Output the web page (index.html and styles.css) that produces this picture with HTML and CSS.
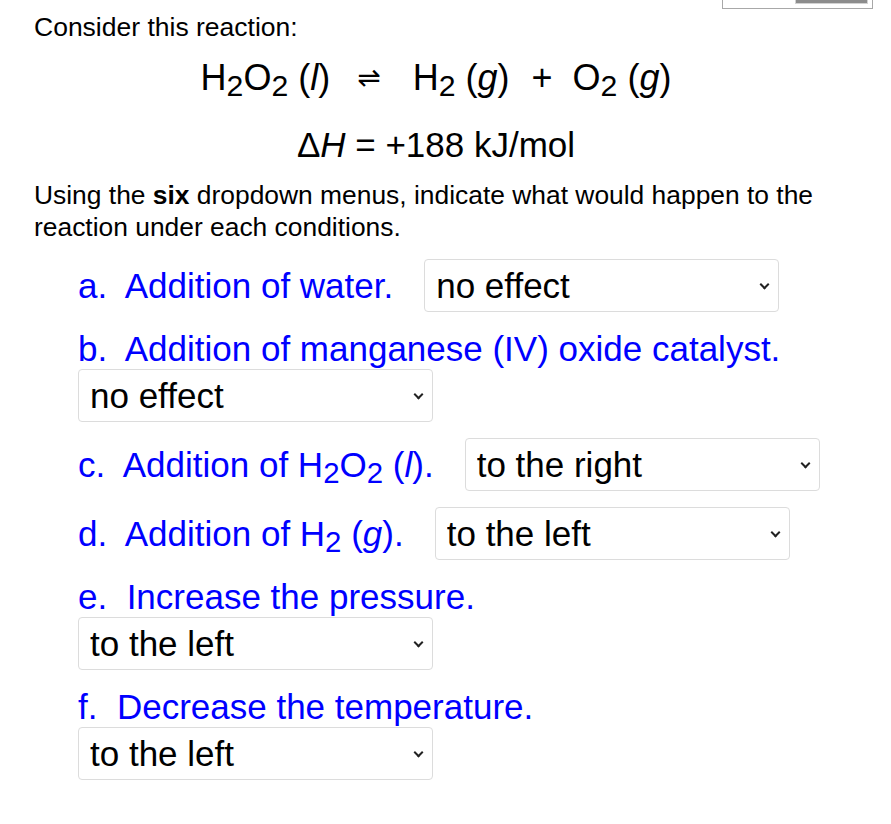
FILE: index.html
```html
<!DOCTYPE html>
<html lang="en">
<head>
<meta charset="utf-8">
<title>Reaction conditions</title>
<link rel="stylesheet" href="styles.css">
</head>
<body>
<div class="corner"><div class="corner-bar"></div></div>
<main class="page">
  <p class="intro">Consider this reaction:</p>
  <p class="eq">H<sub>2</sub>O<sub>2</sub> (<i>l</i>)<span class="arrow">⇌</span>H<sub>2</sub> (<i>g</i>)<span class="plus">+</span>O<sub>2</sub> (<i>g</i>)</p>
  <p class="eq dh">Δ<i>H</i> = +188 kJ/mol</p>
  <p class="instr">Using the <b>six</b> dropdown menus, indicate what would happen to the reaction under each conditions.</p>
  <div class="items">
    <div class="item">
      <span class="label">a.&nbsp; Addition of water.</span>
      <span class="select-wrap"><select class="choice"><option>no effect</option><option>to the right</option><option>to the left</option></select></span>
    </div>
    <div class="item">
      <span class="label">b.&nbsp; Addition of manganese (IV) oxide catalyst.</span>
      <span class="select-wrap"><select class="choice"><option>no effect</option><option>to the right</option><option>to the left</option></select></span>
    </div>
    <div class="item">
      <span class="label">c.&nbsp; Addition of H<sub>2</sub>O<sub>2</sub> (<i>l</i>).</span>
      <span class="select-wrap"><select class="choice"><option>to the right</option><option>no effect</option><option>to the left</option></select></span>
    </div>
    <div class="item">
      <span class="label">d.&nbsp; Addition of H<sub>2</sub> (<i>g</i>).</span>
      <span class="select-wrap"><select class="choice"><option>to the left</option><option>no effect</option><option>to the right</option></select></span>
    </div>
    <div class="item">
      <span class="label">e.&nbsp; Increase the pressure.</span>
      <span class="select-wrap"><select class="choice"><option>to the left</option><option>no effect</option><option>to the right</option></select></span>
    </div>
    <div class="item">
      <span class="label">f.&nbsp; Decrease the temperature.</span>
      <span class="select-wrap"><select class="choice"><option>to the left</option><option>no effect</option><option>to the right</option></select></span>
    </div>
  </div>
</main>
</body>
</html>
```

FILE: styles.css
```css
html, body {
  margin: 0;
  padding: 0;
  background: #fff;
}

body {
  font-family: "Liberation Sans", Arial, sans-serif;
  color: #000;
  position: relative;
  overflow: hidden;
}

.corner {
  position: absolute;
  top: -20px;
  left: 722px;
  width: 149px;
  height: 27px;
  border: 1px solid #a8a8a8;
}

.corner-bar {
  position: absolute;
  left: 72px;
  bottom: 4px;
  width: 71px;
  height: 20px;
  background: #8c8c8c;
  border: 1px solid #d2d2d2;
}

.page {
  padding: 11px 53px 0 34px;
}

.page p {
  margin: 0;
}

.intro {
  font-size: 26.5px;
  line-height: 32px;
}

.eq {
  font-size: 36px;
  line-height: 44px;
  text-align: center;
  margin-top: 13px !important;
}

.eq sub,
.label sub {
  font-size: 0.84em;
  line-height: 0;
  vertical-align: -0.2em;
}

.arrow {
  display: inline-block;
  font-family: "DejaVu Sans", sans-serif;
  font-size: 28px;
  margin: 0 32px 0 27px;
  vertical-align: 0.12em;
}

.plus {
  display: inline-block;
  margin: 0 20px 0 22px;
}

.dh {
  font-size: 35px;
  margin-top: 23px !important;
}

.instr {
  font-size: 26.4px;
  line-height: 32px;
  margin-top: 12px !important;
}

.items {
  padding-left: 44px;
  margin-top: 16px;
}

.item {
  display: flex;
  flex-wrap: wrap;
  align-items: center;
  column-gap: 31px;
  margin-bottom: 16px;
}

.label {
  color: #0000ff;
  font-size: 35px;
  line-height: 41px;
  white-space: nowrap;
}

.select-wrap {
  position: relative;
  display: block;
  width: 355px;
  height: 53px;
}

.select-wrap::after {
  content: "";
  position: absolute;
  right: 11px;
  top: 22px;
  width: 5px;
  height: 5px;
  border-right: 2px solid #222;
  border-bottom: 2px solid #222;
  transform: rotate(45deg);
  pointer-events: none;
}

.choice {
  -webkit-appearance: none;
  appearance: none;
  display: block;
  box-sizing: border-box;
  width: 100%;
  height: 100%;
  font-family: "Liberation Sans", Arial, sans-serif;
  font-size: 35px;
  color: #000;
  background: #fff;
  border: 1px solid #dcdcdc;
  border-radius: 4px;
  padding: 0 30px 0 11px;
  margin: 0;
}
```
